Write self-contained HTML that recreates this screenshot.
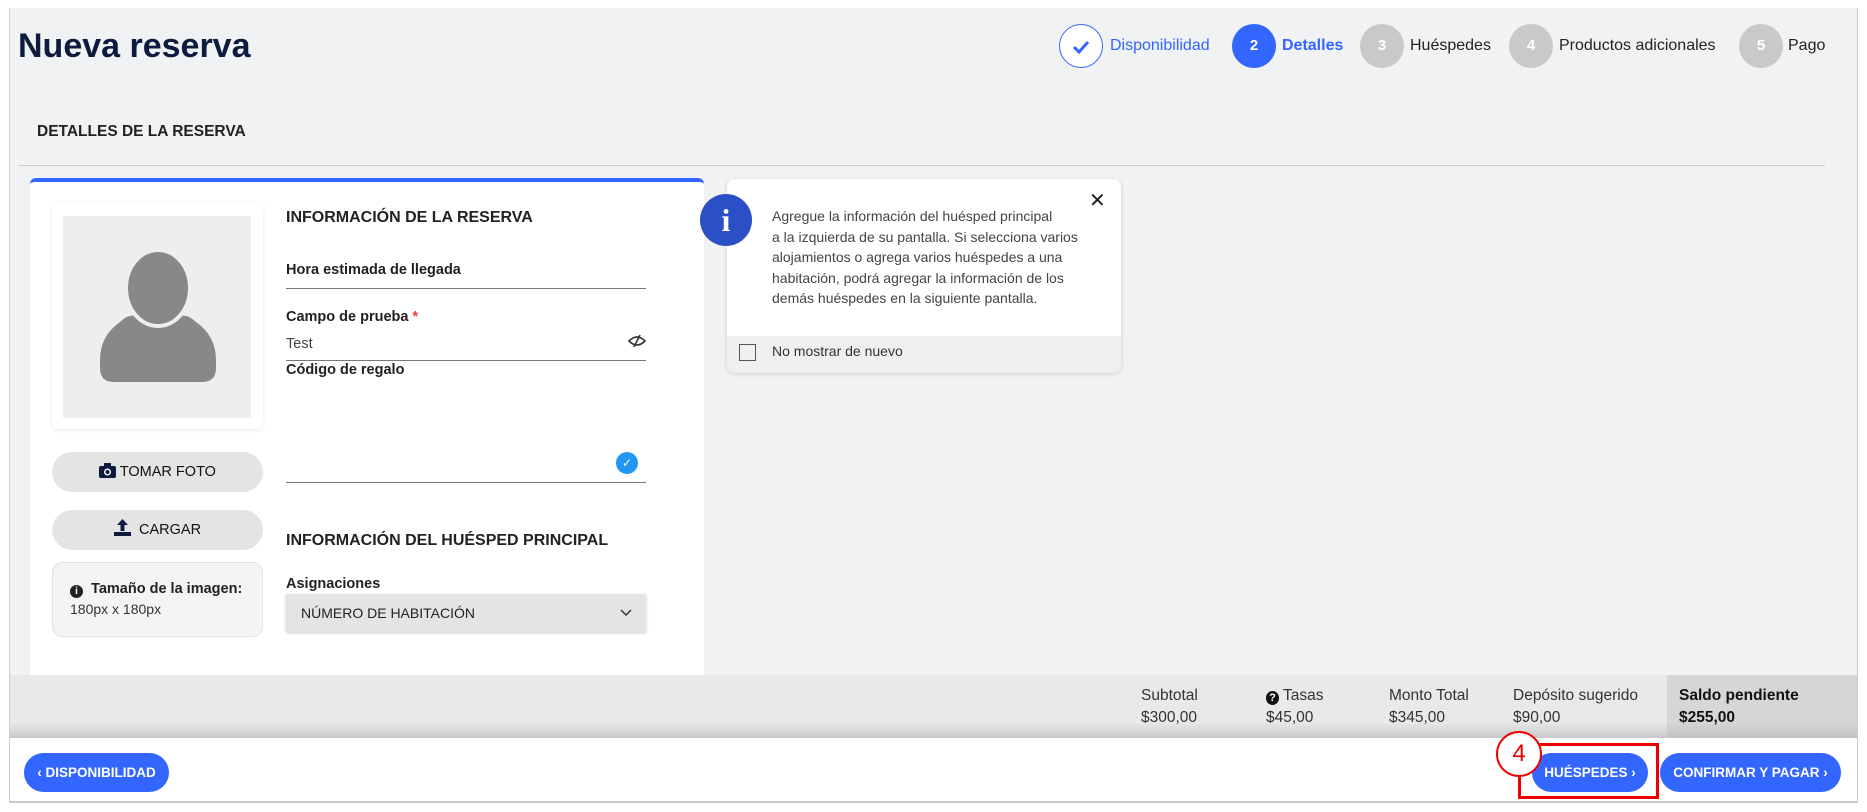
<!DOCTYPE html>
<html><head><meta charset="utf-8"><style>
*{box-sizing:border-box;margin:0;padding:0}
body{width:1867px;height:812px;background:#fff;font-family:"Liberation Sans",sans-serif;color:#1a1a2e;position:relative;overflow:hidden}
.a{position:absolute;white-space:nowrap}
.frame{position:absolute;left:9px;top:8px;width:1849px;height:795px;background:#f1f2f4;border-left:1px solid #ccc;border-right:1px solid #ccc}
.circ{position:absolute;width:44px;height:44px;border-radius:50%;text-align:center;line-height:44px;font-weight:bold;font-size:15px;color:#fff;background:#c9c9c9;top:24px}
.st{position:absolute;top:37px;font-size:16px;color:#222}
.lbl{font-size:14.5px;font-weight:bold;color:#222}
.hd{font-size:16px;font-weight:bold;color:#222}
.line{position:absolute;height:1px;background:#777}
.gbtn{position:absolute;left:52px;width:211px;height:40px;border-radius:20px;background:#e4e4e4;text-align:center;line-height:40px;font-size:14.5px;color:#111}
.bb{position:absolute;height:39px;border-radius:20px;background:#3366ff;color:#fff;font-weight:bold;font-size:13.5px;text-align:center;line-height:39px}
.info p{font-size:14px;color:#444;line-height:20.5px}
.sl{font-size:15.5px;color:#333}
</style></head><body>
<div class="frame"></div>
<div class="a" style="left:18px;top:27px;font-size:34px;font-weight:bold;color:#0d1b3e">Nueva reserva</div>

<div class="circ" style="left:1059px;background:#fff;border:1.5px solid #3366ff"><svg width="18" height="14" viewBox="0 0 18 14" style="margin-top:15px"><path d="M2 7 L7 12 L16 2" fill="none" stroke="#3366ff" stroke-width="3"/></svg></div>
<div class="st" style="left:1110px;color:#3366ff">Disponibilidad</div>
<div class="circ" style="left:1232px;background:#3366ff">2</div>
<div class="st" style="left:1282px;color:#3366ff;font-weight:bold">Detalles</div>
<div class="circ" style="left:1360px">3</div>
<div class="st" style="left:1410px">Huéspedes</div>
<div class="circ" style="left:1509px">4</div>
<div class="st" style="left:1559px">Productos adicionales</div>
<div class="circ" style="left:1739px">5</div>
<div class="st" style="left:1788px">Pago</div>

<div class="a" style="left:37px;top:123px;font-size:15.5px;font-weight:bold;color:#222">DETALLES DE LA RESERVA</div>
<div class="a" style="left:18px;top:165px;width:1807px;height:1px;background:#ccc"></div>

<!-- left card -->
<div class="a" style="left:30px;top:178px;width:674px;height:497px;background:#fff;border-top:4px solid #3366ff;border-radius:6px 6px 0 0"></div>
<div class="a" style="left:52px;top:202px;width:211px;height:227px;background:#fff;border-radius:6px;box-shadow:0 1px 4px rgba(0,0,0,.08)"></div>
<div class="a" style="left:63px;top:216px;width:188px;height:202px;background:#eee"></div>
<svg class="a" style="left:98px;top:248px" width="120" height="134" viewBox="0 0 120 134"><path d="M22 74 Q30 66 38 68 Q60 90 82 68 Q90 66 98 74 Q118 88 118 112 L118 120 Q118 134 104 134 L16 134 Q2 134 2 120 L2 112 Q2 88 22 74Z" fill="#888"/><ellipse cx="60" cy="40" rx="32" ry="38" fill="#888" stroke="#eee" stroke-width="4"/></svg>
<div class="gbtn" style="top:452px"><svg width="17" height="15" viewBox="0 0 17 15" style="vertical-align:-2px"><rect x="0" y="3" width="17" height="12" rx="2" fill="#0d1b3e"/><rect x="5" y="0" width="7" height="4" fill="#0d1b3e"/><circle cx="8.5" cy="9" r="3.5" fill="#fff"/><circle cx="8.5" cy="9" r="2" fill="#0d1b3e"/></svg> TOMAR FOTO</div>
<div class="gbtn" style="top:510px"><svg width="17" height="17" viewBox="0 0 17 17" style="vertical-align:-2px"><path d="M8.5 0 L14 6 H10.5 V12 H6.5 V6 H3Z" fill="#0d1b3e"/><rect x="0" y="13" width="17" height="4" fill="#0d1b3e"/></svg> &nbsp;CARGAR</div>
<div class="a" style="left:52px;top:562px;width:211px;height:75px;background:#f4f4f4;border:1px solid #e2e2e2;border-radius:10px"></div>
<div class="a" style="left:70px;top:581px;font-size:14.5px;font-weight:bold;color:#222"><span style="display:inline-block;width:13px;height:13px;border-radius:50%;background:#222;color:#fff;font-size:10px;text-align:center;line-height:13px;vertical-align:-1px">i</span>&nbsp; Tamaño de la imagen:</div>
<div class="a" style="left:70px;top:601px;font-size:14px;color:#333">180px x 180px</div>

<div class="a hd" style="left:286px;top:209px">INFORMACIÓN DE LA RESERVA</div>
<div class="a lbl" style="left:286px;top:262px">Hora estimada de llegada</div>
<div class="line" style="left:286px;top:288px;width:360px"></div>
<div class="a lbl" style="left:286px;top:309px">Campo de prueba <span style="color:#e33">*</span></div>
<div class="a" style="left:286px;top:336px;font-size:14.5px;color:#444">Test</div>
<svg class="a" style="left:628px;top:334px" width="18" height="14" viewBox="0 0 18 14"><path d="M1 7 Q9 -1 17 7 Q9 15 1 7Z" fill="none" stroke="#333" stroke-width="1.6"/><line x1="12" y1="1" x2="6" y2="13" stroke="#333" stroke-width="1.6"/></svg>
<div class="line" style="left:286px;top:360px;width:360px"></div>
<div class="a lbl" style="left:286px;top:362px">Código de regalo</div>
<div class="line" style="left:286px;top:482px;width:360px"></div>
<div class="a" style="left:616px;top:452px;width:22px;height:22px;border-radius:50%;background:#2196f3;color:#fff;font-size:12px;text-align:center;line-height:22px">✓</div>
<div class="a hd" style="left:286px;top:532px">INFORMACIÓN DEL HUÉSPED PRINCIPAL</div>
<div class="a lbl" style="left:286px;top:576px">Asignaciones</div>
<div class="a" style="left:286px;top:594px;width:360px;height:38px;background:#e4e4e4;box-shadow:0 1px 3px rgba(0,0,0,.2);font-size:14px;color:#222;line-height:38px;padding-left:15px">NÚMERO DE HABITACIÓN<svg style="position:absolute;right:14px;top:15px" width="12" height="8" viewBox="0 0 12 8"><path d="M1 1 L6 6 L11 1" fill="none" stroke="#333" stroke-width="1.5"/></svg></div>

<!-- info card -->
<div class="a" style="left:727px;top:179px;width:394px;height:194px;background:#fff;border-radius:8px;box-shadow:0 1px 4px rgba(0,0,0,.15);overflow:hidden"><div style="position:absolute;left:0;top:157px;width:100%;height:37px;background:#efefef"></div></div>
<div class="a" style="left:700px;top:194px;width:52px;height:52px;border-radius:50%;background:#2a4fc6;color:#fff;font:bold 32px 'Liberation Serif',serif;text-align:center;line-height:52px">i</div>
<div class="a info" style="left:772px;top:206px"><p>Agregue la información del huésped principal</p><p>a la izquierda de su pantalla. Si selecciona varios</p><p>alojamientos o agrega varios huéspedes a una</p><p>habitación, podrá agregar la información de los</p><p>demás huéspedes en la siguiente pantalla.</p></div>
<div class="a" style="left:1089px;top:188px;font-size:20px;color:#222">✕</div>
<div class="a" style="left:739px;top:344px;width:17px;height:17px;border:1.5px solid #555"></div>
<div class="a" style="left:772px;top:343px;font-size:14px;color:#333">No mostrar de nuevo</div>

<!-- summary bar -->
<div class="a" style="left:10px;top:675px;width:1847px;height:63px;background:linear-gradient(#e9e9e9 0,#e9e9e9 75%,#c8c8c8 100%)"></div>
<div class="a" style="left:1667px;top:675px;width:190px;height:63px;background:linear-gradient(#d6d6d6 0,#d6d6d6 75%,#c2c2c2 100%)"></div>
<div class="a sl" style="left:1141px;top:687px">Subtotal</div><div class="a sl" style="left:1141px;top:709px">$300,00</div>
<div class="a sl" style="left:1266px;top:687px"><span style="display:inline-block;width:13px;height:14px;border-radius:50%;background:#111;color:#fff;font-size:11px;font-weight:bold;text-align:center;line-height:14px;vertical-align:-1px">?</span> Tasas</div><div class="a sl" style="left:1266px;top:709px">$45,00</div>
<div class="a sl" style="left:1389px;top:687px">Monto Total</div><div class="a sl" style="left:1389px;top:709px">$345,00</div>
<div class="a sl" style="left:1513px;top:687px">Depósito sugerido</div><div class="a sl" style="left:1513px;top:709px">$90,00</div>
<div class="a sl" style="left:1679px;top:687px;font-weight:bold;color:#111">Saldo pendiente</div><div class="a sl" style="left:1679px;top:709px;font-weight:bold;color:#111">$255,00</div>

<!-- footer -->
<div class="a" style="left:10px;top:738px;width:1847px;height:63px;background:#fff"></div>
<div class="a" style="left:10px;top:801px;width:1847px;height:2px;background:#c8c8c8"></div>
<div class="bb" style="left:24px;top:753px;width:145px">‹ DISPONIBILIDAD</div>
<div class="bb" style="left:1532px;top:753px;width:116px">HUÉSPEDES ›</div>
<div class="bb" style="left:1660px;top:753px;width:181px">CONFIRMAR Y PAGAR ›</div>
<div class="a" style="left:1518px;top:743px;width:141px;height:56px;border:3px solid #e00"></div>
<div class="a" style="left:1496px;top:731px;width:46px;height:46px;border-radius:50%;border:2px solid #e00;background:#fff;color:#e00;font-size:24px;text-align:center;line-height:42px">4</div>
</body></html>
